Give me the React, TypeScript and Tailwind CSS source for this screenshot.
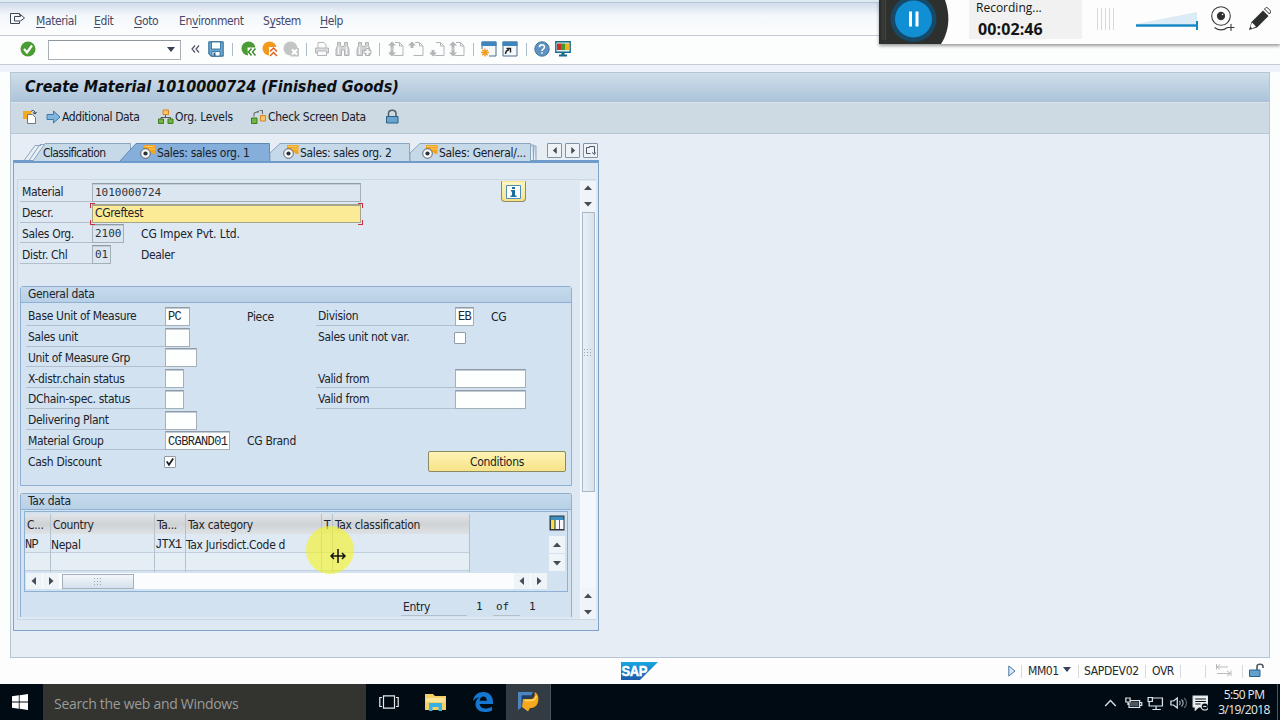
import React from 'react';
import clsx from 'clsx';

const MENU = [
  { label: 'Material', key: 0, width: 'w-[58px]' },
  { label: 'Edit', key: 0, width: 'w-[40px]' },
  { label: 'Goto', key: 0, width: 'w-[45px]' },
  { label: 'Environment', key: 2, width: 'w-[84px]' },
  { label: 'System', key: 1, width: 'w-[57px]' },
  { label: 'Help', key: 0, width: 'w-[40px]' },
];

const Icon: React.FC<{ className?: string; children: React.ReactNode }> = ({ className, children }) => (
  <svg viewBox="0 0 16 16" className={clsx('h-4 w-4 shrink-0 overflow-visible', className)} fill="none">
    {children}
  </svg>
);

const Sep = ({ className }: { className?: string }) => (
  <div className={clsx('h-[13px] w-px shrink-0 bg-[#aebcca]', className)} />
);

const Binoculars = ({ plus }: { plus?: boolean }) => (
  <>
    <path
      d="M2.500 1.500h3v2.500l1 1.500h2l1-1.500V1.500h3V4.500l1.500 4V14.500H9.500V9h-3v5.500H1V8.500L2.500 4.500z"
      fill="#d2d4d5"
      stroke="#aeb1b3"
    />
    <path d="M3.500 6v7M11.500 6v7" stroke="#f4f4f4" />
    {plus && <path d="M10 7.500h3v2h2v3h-2v2h-3v-2H8v-3h2z" fill="#f6f6f6" stroke="#aeb1b3" />}
  </>
);

const PageIcon = ({ up, down }: { up?: boolean; down?: boolean }) => (
  <>
    <path d="M7 1.500h4.500l3.500 3.500v9.500h-9.500" stroke="#b2b5b7" />
    <path d="M11.500 1.500V5H15" stroke="#b2b5b7" />
    {up && <path d="M4 .500l4 4H5.500v2.500h-3V4.500H0z" fill="#b2b5b7" />}
    {down && <path d="M4 15.500l-4-4h2.500v-2.500h3v2.500H8z" fill="#b2b5b7" />}
    {up && down && <path d="M2.500 6h3v4h-3z" fill="#c2c4c6" />}
  </>
);

const Chevrons = ({ color }: { color: string }) => (
  <path d="M10.500 7.500L7.500 11l3 3.500M14.500 7.500l-3 3.500 3 3.500" stroke={color} strokeWidth="1.500" />
);

const Arrow = ({ dir, className }: { dir: 'left' | 'right' | 'up' | 'down'; className?: string }) => (
  <svg viewBox="0 0 8 8" className={clsx('h-2 w-2 shrink-0', className)} fill="#444c55">
    {dir === 'left' && <path d="M6 0v8L1.500 4z" />}
    {dir === 'right' && <path d="M2 0v8l4.500-4z" />}
    {dir === 'up' && <path d="M0 6h8L4 1.500z" />}
    {dir === 'down' && <path d="M0 2h8L4 6.500z" />}
  </svg>
);

const MenuBar = () => (
  <div className="flex h-[36px] shrink-0 flex-col border-b border-[#c3ccd4] bg-linear-to-b from-[#c9d6e5] via-[#f4f8fc] via-45% to-[#fcfdfd]">
    <div className="h-[3px] border-b border-[#b4c6d8] bg-[#dfe9f2]" />
    <div className="flex flex-1 items-center pt-[4px] pl-[10px]">
      <svg viewBox="0 0 15 12" className="-mt-[5px] mr-[11px] h-3 w-[15px]" fill="none" stroke="#3f4757">
        <path d="M9.500 2.500v-2h-9v10h9v-2" />
        <path d="M4.500 3.500h6v-2l4 3.500-4 3H4.500z" />
      </svg>
      {MENU.map((m) => (
        <span key={m.label} className={clsx('text-[12px] leading-4 tracking-[-0.4px] text-[#474867]', m.width)}>
          {m.label.slice(0, m.key)}
          <span className="underline underline-offset-2">{m.label[m.key]}</span>
          {m.label.slice(m.key + 1)}
        </span>
      ))}
    </div>
  </div>
);

const ToolBar = () => (
  <div className="flex h-[29px] shrink-0 items-center border-b border-[#c3ccd4] bg-[#fcfdfd] pl-[20px] pb-[2px]">
    <Icon>
      <circle cx="8" cy="8" r="7.500" fill="#4c9c36" />
      <path d="M4 8l3 3.500 5-7" stroke="#fff" strokeWidth="2.200" />
    </Icon>
    <div className="mt-px ml-[12px] flex h-[20px] w-[133px] shrink-0 items-center justify-end border border-t-[#8f979d] border-[#a9b0b6] bg-white pr-[5px]">
      <svg viewBox="0 0 8 5" className="h-[5px] w-2" fill="#39405a">
        <path d="M0 0h8L4 5z" />
      </svg>
    </div>
    <svg viewBox="0 0 9 8" className="ml-[10px] h-2 w-[9px] shrink-0" fill="none" stroke="#4d5560" strokeWidth="1.200">
      <path d="M4 .5L1 4l3 3.500M8 .5L5 4l3 3.500" />
    </svg>
    <Icon className="ml-[8px]">
      <path d="M.800 .800h14.400v14.400H3L.800 13z" fill="#67a9d3" stroke="#2b678f" />
      <path d="M3.500 1h9v7h-9z" fill="#fbfdfe" stroke="#2b678f" strokeWidth=".8" />
      <path d="M4 10.500h8V15H4z" fill="#fbfdfe" stroke="#2b678f" strokeWidth=".8" />
      <path d="M5.500 11.500h2V15h-2z" fill="#2b678f" />
    </Icon>
    <Sep className="ml-[8px]" />
    <Icon className="ml-[8px]">
      <circle cx="7.500" cy="7.500" r="7" fill="#4c9c36" />
      <path d="M6.500 6.500H16v8.500H7z" fill="#fff" />
      <Chevrons color="#3c8a2c" />
    </Icon>
    <Icon className="ml-[5px]">
      <circle cx="7.500" cy="7.500" r="7" fill="#f19a1f" />
      <path d="M7 6h9v10H7z" fill="#fff" />
      <path d="M8 10.500l3.500-3.500 3.500 3.500M8 15l3.500-3.500 3.500 3.500" stroke="#e2641c" strokeWidth="1.500" />
    </Icon>
    <Icon className="ml-[5px]">
      <circle cx="7.500" cy="7.500" r="7" fill="#c2c4c5" />
      <path d="M7.500 7h8.500v8.500H7.500z" fill="#c2c4c5" />
      <path d="M9 8.500l5 5M14 8.500l-5 5" stroke="#fff" strokeWidth="2" />
    </Icon>
    <Sep className="ml-[7px]" />
    <Icon className="ml-[7px]">
      <path d="M4 7V1.500h6L12 4v3" stroke="#b3b6b8" />
      <path d="M1.500 7h13v5h-13z" fill="#dcddde" stroke="#b3b6b8" />
      <path d="M3.500 10h9v4.500h-9z" fill="#fafafa" stroke="#b3b6b8" />
    </Icon>
    <Icon className="ml-[5px]">
      <Binoculars />
    </Icon>
    <Icon className="ml-[5px]">
      <Binoculars plus />
    </Icon>
    <Sep className="ml-[7px]" />
    <Icon className="ml-[8px]">
      <PageIcon up down />
    </Icon>
    <Icon className="ml-[4px]">
      <PageIcon up />
    </Icon>
    <Icon className="ml-[5px]">
      <PageIcon down />
    </Icon>
    <Icon className="ml-[4px]">
      <PageIcon up down />
    </Icon>
    <Sep className="ml-[8px]" />
    <Icon className="ml-[7px]">
      <path d="M1 1h14v14H1z" fill="#f4f8fa" stroke="#4b6f8c" />
      <path d="M.500.500h15V5H.500z" fill="#3d86bd" />
      <path d="M0 8h8v8H0z" fill="#fcfdfd" />
      <path d="M4 7.500v8M0 11.500h8M1.200 8.700l5.600 5.600M6.800 8.700l-5.600 5.600" stroke="#f0a01e" strokeWidth="1.500" />
    </Icon>
    <Icon className="ml-[5px]">
      <path d="M1 1h14v14H1z" fill="#f4f8fa" stroke="#4b6f8c" />
      <path d="M.500.500h15V5H.500z" fill="#3d86bd" />
      <path d="M3.500 13c0-2 1-3.500 3.500-4.500M4.500 7.500h4v4" stroke="#222" strokeWidth="1.400" />
    </Icon>
    <Sep className="ml-[8px]" />
    <Icon className="ml-[7px]">
      <circle cx="8" cy="8" r="7.200" fill="#5d93c0" stroke="#3f739f" />
      <path d="M5.500 6.200C5.500 3 10.500 3 10.500 6c0 2-2.500 2-2.500 4M8 11.200v1.600" stroke="#fff" strokeWidth="1.600" />
    </Icon>
    <Icon className="ml-[5px]">
      <path d="M.8.800h14.400v10.400H.800z" fill="#dff0f4" stroke="#1b6a8c" strokeWidth="1.400" />
      <path d="M2 2.500h4V9H2z" fill="#d22b24" />
      <path d="M6 2.500h4V9H6z" fill="#3a9a34" />
      <path d="M10 2.500h4V9h-4z" fill="#eeb21f" />
      <path d="M6.500 11.500h3v2h2.500v2H4v-2h2.500z" fill="#1b6a8c" />
    </Icon>
  </div>
);

const TitleBar = () => (
  <div className="flex h-[30px] shrink-0 items-center border-b border-[#d7e4ee] bg-linear-to-b from-[#cfdeea] to-[#abc3d9] pb-[2px] pl-[14px]">
    <h1 className="text-[16px] font-bold text-[#0b0f14] italic">Create Material 1010000724 (Finished Goods)</h1>
  </div>
);

const AppToolBar = () => (
  <div className="flex h-[31px] shrink-0 items-center border-b border-[#b5c7d4] bg-[#cddae3] pb-[2px] pl-[11px]">
    <Icon>
      <path d="M1 2h8v8H1z" fill="#f3a91f" />
      <path d="M5.500 5.500h5l3 3v6h-8z" fill="#fff" stroke="#6f7880" />
      <path d="M9 2.500c2-2 4-1 4 2M11 3.500l2 1.500 1.500-2" stroke="#333" />
    </Icon>
    <Icon className="ml-[8px]">
      <path d="M1 5.500h6.500V2L14 8l-6.500 6v-3.500H1z" fill="#82b6de" stroke="#3c78a8" />
    </Icon>
    <span className="w-[96px] text-[12px] tracking-[-0.4px] text-[#16202a]">Additional Data</span>
    <Icon>
      <path d="M7.500 6v3M3 11V8.500h9.500V11" stroke="#555" />
      <path d="M5 1h5.500v4.500H5z" fill="#f9c66a" stroke="#d9821c" />
      <path d="M.500 10h5v4.500h-5zM10 10h5v4.500h-5z" fill="#74b53f" stroke="#3f7d25" />
    </Icon>
    <span className="ml-px w-[76px] text-[12px] tracking-[-0.25px] text-[#16202a]">Org. Levels</span>
    <Icon>
      <path d="M.500 9H6v5.500H.500z" fill="#74b53f" stroke="#3f7d25" />
      <path d="M9.500 6.500h5v5.500h-5z" fill="#f9c66a" stroke="#d9821c" />
      <path d="M3 7.500V4l4-1.500M8 1.500L6.500 4M9 1.500h2.500v3.500" stroke="#555" strokeWidth=".9" />
    </Icon>
    <span className="ml-px w-[117px] text-[12px] tracking-[-0.3px] text-[#16202a]">Check Screen Data</span>
    <Icon>
      <path d="M3.500 7.500V4.500C3.500 0 11 0 11 4.500v3" stroke="#555d66" strokeWidth="1.500" />
      <path d="M1.500 7.500h11.500v6.500H1.500z" fill="#6aa5cf" stroke="#2d5f88" />
    </Icon>
  </div>
);

const ViewIcon = () => (
  <Icon className="relative">
    <path d="M4 1h11.500v9H13l-2-2H4z" fill="#f2a51e" />
    <path d="M5 2.500h9M9 5h6" stroke="#ffc95c" />
    <circle cx="5.500" cy="9.500" r="4.800" fill="#f7f9fa" stroke="#56606b" />
    <circle cx="5.500" cy="9.500" r="2.100" fill="#2b323a" />
  </Icon>
);

interface TabProps {
  label: string;
  active?: boolean;
  icon?: boolean;
  stack?: 'left' | 'right';
  width: number;
  className: string;
}

const Tab: React.FC<TabProps> = ({ label, active, icon, stack, width, className }) => (
  <div className={clsx('relative flex h-[18px] shrink-0 items-center', className)}>
    <svg viewBox={`0 0 ${width} 18`} className="absolute inset-0 h-full w-full overflow-visible">
      {stack === 'left' && <path d="M0 17.500L11 2.500h6M5 17.500L16 1.500h6" fill="none" stroke="#8aa6c0" />}
      {stack === 'right' && (
        <path d={`M${width} 2h2.500v15M${width + 2} 3h3v14`} fill="#c9dbea" stroke="#8aa6c0" />
      )}
      <path
        d={
          stack === 'left'
            ? `M9 18L21 .5H${width - 0.5}V18`
            : active
              ? `M0 18L16 .5H${width - 0.5}V18`
              : `M0 18V10L10 .5H${width - 0.5}V18`
        }
        fill={active ? '#86aedb' : '#c6d9e9'}
        stroke={active ? '#5f8ab5' : '#8aa6c0'}
      />
    </svg>
    {icon && <ViewIcon />}
    <span className="relative ml-px pt-[2px] text-[12px] whitespace-nowrap text-[#16202a]">{label}</span>
  </div>
);

const NavButton: React.FC<{ children: React.ReactNode }> = ({ children }) => (
  <div className="flex h-[15px] w-[15px] items-center justify-center rounded-[1px] border border-[#7f93a8] bg-[#eef3f8]">
    {children}
  </div>
);

const TabStrip = () => (
  <div className="flex h-[17px] shrink-0 pl-[11px]">
    <Tab label="Classification" stack="left" width={107} className="w-[107px] pl-[18px] tracking-[-0.65px]" />
    <Tab label="Sales: sales org. 1" icon active width={150} className="-ml-[11px] w-[150px] pl-[20px] tracking-[-0.3px]" />
    <Tab label="Sales: sales org. 2" icon width={140} className="w-[140px] pl-[13px] tracking-[-0.35px]" />
    <Tab label="Sales: General/..." icon stack="right" width={121} className="w-[121px] pl-[12px] tracking-[-0.3px]" />
    <div className="ml-[16px] flex gap-[3px]">
      <NavButton>
        <Arrow dir="left" className="h-[7px]" />
      </NavButton>
      <NavButton>
        <Arrow dir="right" className="h-[7px]" />
      </NavButton>
      <NavButton>
        <svg viewBox="0 0 11 11" className="h-[11px] w-[11px]" fill="none" stroke="#4a5663">
          <path d="M5.500 8.500h-4v-6h3v-1h5v7M7 7.500l2.500 2 1-2" />
        </svg>
      </NavButton>
    </div>
  </div>
);

interface FieldProps {
  value?: string;
  width: string;
  readOnly?: boolean;
}

const Field: React.FC<FieldProps> = ({ value, width, readOnly }) => (
  <div
    className={clsx(
      'flex h-[19px] shrink-0 items-center border border-[#a5afb8] border-t-[#8f9ba6] pl-[2px] whitespace-nowrap shadow-[inset_0_1px_0_#c3ccd4]',
      readOnly
        ? 'bg-[#dce6f0] font-["DejaVu_Sans_Mono",monospace] text-[11px] tracking-normal text-[#2a3440]'
        : 'bg-[#fdfefe] pt-[3px] font-["Liberation_Mono",monospace] text-[12px] tracking-[-0.6px] text-[#20262c]',
      width,
    )}
  >
    {value}
  </div>
);

const Label: React.FC<{ className: string; children: React.ReactNode; line?: boolean }> = ({
  className,
  children,
  line = true,
}) => (
  <div
    className={clsx(
      'flex h-[20px] shrink-0 items-center border-b pl-[2px] pt-[3px] whitespace-nowrap',
      line ? 'border-[#b3bfca]' : 'border-transparent',
      className,
    )}
  >
    {children}
  </div>
);

const HeaderRow: React.FC<{ label: string; children: React.ReactNode }> = ({ label, children }) => (
  <div className="flex h-[20.75px] items-end">
    <Label className="w-[72px]">{label}</Label>
    {children}
  </div>
);

const Corner = ({ className }: { className: string }) => (
  <span className={clsx('absolute z-10 h-[5px] w-[5px] border-[#c5303c]', className)} />
);

const MaterialHeader = () => (
  <div className="flex h-[105px] flex-col">
    <HeaderRow label="Material">
      <Field value="1010000724" width="w-[269px]" readOnly />
      <div className="ml-[140px] flex h-[21px] w-[25px] items-center justify-center self-start rounded-b-sm border border-[#8f8a67] border-t-transparent bg-linear-to-b from-[#fdf6c4] to-[#f7e284]">
        <svg viewBox="0 0 15 14" className="h-[14px] w-[15px]">
          <path d="M.500.500h14v13H.500z" fill="#fff" stroke="#4d8fb4" />
          <path d="M6 2h3v2H6zM5 5h4v5.500h1.500V12h-6v-1.500H6v-4H5z" fill="#1b6f9e" />
        </svg>
      </div>
    </HeaderRow>
    <HeaderRow label="Descr.">
      <div className="relative flex h-[19px] w-[269px] items-center border border-t-2 border-[#a5a58e] bg-[#fbeb96] pl-[2px]">
        CGreftest
        <Corner className="-top-[3px] -left-[3px] border-t border-l" />
        <Corner className="-top-[3px] -right-[3px] border-t border-r" />
        <Corner className="-bottom-[3px] -left-[3px] border-b border-l" />
        <Corner className="-right-[3px] -bottom-[3px] border-r border-b" />
      </div>
    </HeaderRow>
    <HeaderRow label="Sales Org.">
      <Field value="2100" width="w-[32px]" readOnly />
      <span className="ml-[17px] pb-px tracking-[-0.1px]">CG Impex Pvt. Ltd.</span>
    </HeaderRow>
    <HeaderRow label="Distr. Chl">
      <Field value="01" width="w-[19px]" readOnly />
      <span className="ml-[30px] pb-px">Dealer</span>
    </HeaderRow>
  </div>
);

const CheckBox = ({ checked }: { checked?: boolean }) => (
  <div className="-ml-px mb-[3px] flex h-[12px] w-[12px] items-center justify-center rounded-[1px] border border-[#8f9ba6] bg-white">
    {checked && (
      <svg viewBox="0 0 8 8" className="h-2 w-2" fill="none" stroke="#1b2026" strokeWidth="1.800">
        <path d="M.800 3.500L3 6.800 7.200.600" />
      </svg>
    )}
  </div>
);

const ROWS = [
  { label: 'Base Unit of Measure', width: 'w-[25px]', value: 'PC', text: 'Piece' },
  { label: 'Sales unit', width: 'w-[25px]' },
  { label: 'Unit of Measure Grp', width: 'w-[32px]' },
  { label: 'X-distr.chain status', width: 'w-[19px]' },
  { label: 'DChain-spec. status', width: 'w-[19px]' },
  { label: 'Delivering Plant', width: 'w-[32px]' },
  { label: 'Material Group', width: 'w-[65px]', value: 'CGBRAND01', text: 'CG Brand' },
];

const GroupTitle: React.FC<{ children: React.ReactNode }> = ({ children }) => (
  <div className="flex h-[16px] shrink-0 items-center border-b border-[#8fb0d2] bg-linear-to-b from-[#c6daec] to-[#b8d0e6] pl-[7px]">
    {children}
  </div>
);

const GeneralData = () => (
  <section className="flex h-[200px] w-[552px] flex-col rounded-t-[3px] border border-[#8fb0d2] bg-[#d2e2f1]">
    <GroupTitle>General data</GroupTitle>
    <div className="flex pt-[2px] pl-[5px]">
      <div className="w-[290px]">
        {ROWS.map((r) => (
          <div key={r.label} className="flex h-[20.75px] items-end">
            <Label className="w-[139px]">{r.label}</Label>
            <div className="w-[82px]">
              <Field value={r.value} width={r.width} />
            </div>
            <span className="pb-px">{r.text}</span>
          </div>
        ))}
        <div className="flex h-[20.75px] items-end">
          <Label line={false} className="w-[139px]">
            Cash Discount
          </Label>
          <CheckBox checked />
        </div>
      </div>
      <div className="flex w-[250px] flex-col">
        <div className="flex h-[20.75px] items-end">
          <Label className="w-[139px]">Division</Label>
          <Field value="EB" width="w-[19px]" />
          <span className="ml-[17px] pb-px">CG</span>
        </div>
        <div className="flex h-[41.5px] items-start pt-px">
          <Label line={false} className="w-[139px]">
            Sales unit not var.
          </Label>
          <div className="pt-[5px]">
            <CheckBox />
          </div>
        </div>
        {[0, 1].map((i) => (
          <div key={i} className="flex h-[20.75px] items-end">
            <Label className="w-[139px]">Valid from</Label>
            <Field width="w-[71px]" />
          </div>
        ))}
        <button className="mt-[42px] ml-[112px] h-[21px] w-[138px] rounded-[2px] border border-[#8b8865] bg-linear-to-b from-[#fdf3b4] to-[#f7e387] pt-px text-center leading-[18px]">
          Conditions
        </button>
      </div>
    </div>
  </section>
);

const COLS = [
  { head: 'C...', cell: 'NP', width: 'w-[26px]', mono: true },
  { head: 'Country', cell: 'Nepal', width: 'w-[104px]' },
  { head: 'Ta...', cell: 'JTX1', width: 'w-[31px]', mono: true },
  { head: 'Tax category', cell: 'Tax Jurisdict.Code d', width: 'w-[136px]' },
  { head: 'T', cell: '', width: 'w-[11px]' },
  { head: 'Tax classification', cell: '', width: 'w-[137px]' },
];

const ArrowBox: React.FC<{ dir: 'left' | 'right' | 'up' | 'down'; className: string }> = ({ dir, className }) => (
  <div className={clsx('flex shrink-0 items-center justify-center bg-[#eff4f9]', className)}>
    <Arrow dir={dir} />
  </div>
);

const TaxData = () => (
  <section className="flex h-[124px] w-[552px] flex-col rounded-t-[3px] border border-b-0 border-[#8fb0d2] bg-[#d2e2f1]">
    <GroupTitle>Tax data</GroupTitle>
    <div className="mt-px ml-[3px] flex h-[81px] w-[544px] flex-col border border-[#8fb0d2] pt-[2px]">
      <div className="flex h-[58px]">
        {COLS.map((c) => (
          <div key={c.head} className={clsx('flex shrink-0 flex-col border-r border-[#b4c0cc]', c.width)}>
            <div className="flex h-[20px] items-center overflow-hidden bg-linear-to-b from-[#e2e5e8] via-[#d0d3d6] to-[#dfe2e5] pt-[2px] pl-[2px] whitespace-nowrap">
              {c.head}
            </div>
            <div
              className={clsx(
                'flex h-[19px] items-center border-b border-[#c1cfdc] bg-[#dfe9f3] pt-[4px] whitespace-nowrap',
                c.mono && 'font-["Liberation_Mono",monospace] text-[12px] tracking-[-0.6px]',
              )}
            >
              {c.cell}
            </div>
            <div className="h-[18px] border-b border-[#c1cfdc] bg-[#e6eef5]" />
          </div>
        ))}
        <div className="ml-[79px] flex w-[16px] flex-col">
          <svg viewBox="0 0 16 18" className="mb-[4px] h-[18px] w-4 shrink-0">
            <path d="M.500 1.500h15v15H.500z" fill="#2d3640" />
            <path d="M1.500 2.500h13V6h-13z" fill="#3a8ec2" />
            <path d="M2 6h3.500v9H2z" fill="#f4e33a" />
            <path d="M6.500 6h3.500v9H6.500zM11 6h3.500v9H11z" fill="#f6f8fa" />
            <path d="M6 3v12M10.500 3v12" stroke="#6b8ba5" strokeWidth=".6" />
          </svg>
          <ArrowBox dir="up" className="mb-px h-[17px]" />
          <ArrowBox dir="down" className="h-[17px]" />
        </div>
      </div>
      <div className="mt-px ml-[1px] flex h-[16px] w-[521px] items-center bg-[#fbfcfe]">
        <ArrowBox dir="left" className="mr-px h-4 w-[16px]" />
        <ArrowBox dir="right" className="h-4 w-[16px]" />
        <div className="ml-[3px] flex h-[15px] w-[72px] items-center justify-center gap-px border border-[#a3b0bd] bg-linear-to-b from-[#f3f7fb] to-[#d5e0ea]">
          <Grip />
        </div>
        <ArrowBox dir="left" className="mr-px ml-auto h-4 w-[16px]" />
        <ArrowBox dir="right" className="h-4 w-[16px]" />
      </div>
    </div>
    <div className="flex pt-[4px] pl-[380px]">
      <Label className="w-[66px]">Entry</Label>
      <div className="flex h-[20px] items-center font-['DejaVu_Sans_Mono',monospace] text-[11px] tracking-normal">
        <span className="ml-[9px] w-[17px] pt-px">1</span>
        <span className="flex h-[20px] w-[27px] items-center border-b border-[#b3bfca] pt-px pl-[3px]">of</span>
        <span className="ml-[9px] pt-px">1</span>
      </div>
    </div>
  </section>
);

const Grip = ({ className }: { className?: string }) => (
  <svg viewBox="0 0 8 7" className={clsx('h-[7px] w-2', className)} stroke="#9aa8b6" strokeDasharray="1 2">
    <path d="M0 .500h8M0 3.500h8M0 6.500h8" />
  </svg>
);

const VScroll = () => (
  <div className="ml-[8px] flex h-[438px] w-[16px] flex-col items-center bg-[#f4f7fb]">
    <ArrowBox dir="up" className="h-[14px] w-[15px]" />
    <ArrowBox dir="down" className="h-[17px] w-[15px]" />
    <div className="flex h-[280px] w-[13px] items-center justify-center border border-[#a8b5c2] bg-linear-to-r from-[#e9f0f6] to-[#d8e3ed]">
      <Grip />
    </div>
    <ArrowBox dir="up" className="mt-auto h-[16px] w-[15px]" />
    <ArrowBox dir="down" className="h-[15px] w-[15px]" />
  </div>
);

const Panel = () => (
  <div className="flex h-[471px] w-[586px] flex-col border border-t-[3px] border-[#7fa3c7] border-t-[#6f9bcb] bg-[#dde8f3] pt-[16px] pl-[3px]">
    <div className="flex h-[441px] w-[579px] border-t border-b border-l border-[#cbd8e4] pt-px">
      <div className="flex w-[554px] flex-col pl-[2px]">
        <MaterialHeader />
        <GeneralData />
        <div className="h-[7px] shrink-0" />
        <TaxData />
      </div>
      <VScroll />
    </div>
  </div>
);

const StatusBar = () => (
  <div className="flex h-[26px] shrink-0 items-center bg-[#fcfdfc] text-[12px] tracking-[-0.4px] text-[#23282e]">
    <svg viewBox="0 0 37 18" className="ml-[621px] h-[18px] w-[37px]">
      <defs>
        <linearGradient id="sap" x2="0" y2="1">
          <stop offset="0" stopColor="#19a7e0" />
          <stop offset="1" stopColor="#1b5cab" />
        </linearGradient>
      </defs>
      <path d="M0 0h37L19 18H0z" fill="url(#sap)" />
      <text
        x=".5"
        y="14"
        fill="#fff"
        stroke="#fff"
        strokeWidth=".5"
        fontFamily="Liberation Sans"
        fontWeight="bold"
        fontSize="14"
        textLength="25.500"
        lengthAdjust="spacingAndGlyphs"
      >
        SAP
      </text>
    </svg>
    <svg viewBox="0 0 8 12" className="ml-[350px] h-3 w-2" fill="#dbe8f3" stroke="#4678a6">
      <path d="M.800 1v10L7 6z" />
    </svg>
    <Sep className="ml-[5px] bg-[#d5dadd]" />
    <span className="ml-[6px] w-[35px]">MM01</span>
    <svg viewBox="0 0 8 5" className="-mt-1 h-[5px] w-2" fill="#39405a">
      <path d="M0 0h8L4 5z" />
    </svg>
    <Sep className="ml-[7px] bg-[#d5dadd]" />
    <span className="ml-[5px] w-[61px] tracking-[-0.3px]">SAPDEV02</span>
    <Sep className="bg-[#d5dadd]" />
    <span className="ml-[6px] w-[28px]">OVR</span>
    <Sep className="bg-[#d5dadd]" />
    <Sep className="ml-[24px] bg-[#d5dadd]" />
    <Icon className="ml-[10px]">
      <path d="M.500 1v5.500M15 7.500v5.500M1 4h11M4 1.500L1 4l3 2.500M1 10.500h13M11 8l3.500 2.500L11 13" stroke="#b7bbbe" />
    </Icon>
    <Sep className="ml-[10px] bg-[#d5dadd]" />
    <Icon className="ml-[6px]">
      <path d="M8 7V3.500c0-3 6-3 6 0V5" stroke="#4f565d" strokeWidth="1.600" />
      <path d="M.500 7H11v6.500H.500z" fill="#62a1cd" stroke="#2a628e" />
    </Icon>
  </div>
);

const TaskBar = () => (
  <div className="flex h-[36px] shrink-0 items-center bg-[#010b13] font-['Open_Sans','Noto_Sans',sans-serif]">
    <div className="flex w-[43px] justify-center pr-[3px]">
      <svg viewBox="0 0 16 16" className="h-4 w-4" fill="#fff">
        <path d="M0 2.300l6.800-1v6.300H0zM7.600 1.200L16 0v7.600H7.600zM0 8.400h6.800v6.300l-6.800-1zM7.600 8.400H16V16l-8.400-1.200z" />
      </svg>
    </div>
    <div className="flex h-full w-[323px] items-center bg-[#333430] pt-[2px] pl-[11px] text-[14px] tracking-[-0.3px] text-[#9b9b99]">
      Search the web and Windows
    </div>
    <svg viewBox="0 0 20 14" className="ml-[13px] h-[14px] w-5" fill="none" stroke="#e8eaeb" strokeWidth="1.200">
      <path d="M4.500 .800h11v12.400h-11zM3 2.500H.800v9H3M17 2.500h2.200v9H17" />
    </svg>
    <svg viewBox="0 0 21 18" className="ml-[26px] h-[18px] w-[21px]">
      <path d="M0 1h8l2 2h11v14H0z" fill="#f3cf68" />
      <path d="M1 5h19v4H1z" fill="#fae49a" />
      <path d="M4 10h13v8h-3.500v-4h-6v4H4z" fill="#37b2e4" />
    </svg>
    <svg viewBox="0 0 20 20" className="ml-[27px] h-5 w-5" fill="#1477d1">
      <path d="M0 9C1 3 5 0 10.500 0 16.500 0 20 4.500 20 10v2H6.500c.5 3 3 4.500 6 4.500 2.500 0 4.500-.600 6.500-1.800v3.800c-2 1-4.500 1.500-7 1.500C6 20 2.500 16.500 2.500 12 2.500 9 4 6.800 6.500 5.200 4 5.500 1.500 7 0 9zm6.500-.300h7.300C13.800 6 12.500 4.500 10.500 4.500S7 6 6.500 8.700z" />
    </svg>
    <div className="ml-[13px] flex h-full w-[45px] items-center justify-center border-r border-[#4b545b] bg-[#333c42]">
      <svg viewBox="0 0 22 22" className="h-[22px] w-[22px]">
        <path d="M1 1h15l-2 3.500H5V16l-4 3z" fill="#4c86c2" />
        <path d="M4.500 4.500H14L8 10v9l-3.500-2z" fill="#1e3f68" />
        <path d="M6 8h8c3 0 4.500-3 3.500-7 4 2 4.500 6 3.500 10s-4 6-8 6l-2 3.500-6-4.500z" fill="#f5a81c" />
        <path d="M8 9.500h6c3 0 5-2 5-4.500" stroke="#ffdb6b" fill="none" strokeWidth="1.500" />
      </svg>
    </div>
    <svg viewBox="0 0 100 16" className="mt-[2px] ml-auto h-4 w-[106px] shrink-0" preserveAspectRatio="none" fill="none" stroke="#dfe3e6" strokeWidth="1.200">
      <path d="M3 11l5-5.500L13 11" />
      <path d="M26 5.500h9.500v7H25.500V8M36 7.500h1.500v3H36M22.500 3v4h4V3zM24.500 7v3" />
      <path d="M26.500 6.500h8v5h-8z" fill="#dfe3e6" stroke="none" opacity=".35" />
      <path d="M47 3h10v8H44.500V6.500M51 11v3M47.500 14.500h8M43.500 2.500h4v4h-4z" />
      <path d="M65 6h2.500L71 3v10l-3.500-3H65z" />
      <path d="M73 6c1 1 1 3 0 4M75 4.500c2 2 2 5 0 7" opacity=".7" />
      <path d="M77.500 3c3 3 3 7 0 10" opacity=".4" />
      <path d="M86 1h14v11H91l-3 3v-3h-2z" fill="#eef0f1" />
      <path d="M88 4h10M88 6.500h10M88 9h5" stroke="#010b13" />
      <circle cx="97" cy="11.500" r="3.500" fill="#010b13" />
      <path d="M95.500 11.500h3" />
    </svg>
    <div className="ml-[10px] w-[52px] text-center text-[12px] leading-[15.500px] tracking-[-0.6px] whitespace-nowrap text-[#e9ebec]">
      <div>5:50 PM</div>
      <div>3/19/2018</div>
    </div>
    <div className="ml-[7px] h-full w-[3px] border-l border-[#4b545b]" />
  </div>
);

const Recorder = () => (
  <div className="absolute top-0 right-0 flex h-[44px] w-[401px] bg-[#fcfdfc] font-['Open_Sans','Noto_Sans',sans-serif] shadow-[0_2px_3px_rgba(90,90,90,0.6)]">
    <svg viewBox="0 0 70 44" className="h-[44px] w-[70px]">
      <path d="M0 0h66c5 14 5 30-4 44H0z" fill="#2e302e" />
      <path d="M4 0v40M6.500 0v40" stroke="#454745" />
      <circle cx="34.500" cy="19" r="23" fill="#174a69" />
      <circle cx="34.500" cy="19" r="18.500" fill="#118fd4" />
      <path d="M31.500 11.500v15M38 11.500v15" stroke="#fff" strokeWidth="3" />
    </svg>
    <div className="ml-[20px] h-[39px] w-[113px] bg-[#f0f1f0] pl-[7px] text-[#151515]">
      <div className="text-[12px] leading-[15px]">Recording...</div>
      <div className="pt-[3px] pl-[2px] text-[16px] leading-[22px] font-bold tracking-[0.1px]">00:02:46</div>
    </div>
    <svg viewBox="0 0 18 22" className="mt-[8px] ml-[15px] h-[22px] w-[18px]" stroke="#d6dade">
      <path d="M.500 0v22M4.500 0v22M8.500 0v22M12.500 0v22M16.500 0v22" />
    </svg>
    <svg viewBox="0 0 62 18" className="mt-[12px] ml-[21px] h-[18px] w-[62px]">
      <path d="M0 12L61 0v12z" fill="#dcecf6" />
      <path d="M0 13.500h61" stroke="#1787c4" strokeWidth="2.500" />
      <path d="M61 9v9" stroke="#1787c4" strokeWidth="2" />
    </svg>
    <svg viewBox="0 0 24 26" className="mt-[6px] ml-[13px] h-[26px] w-6 shrink-0" fill="none" stroke="#3b3d3d" strokeWidth="1.100">
      <circle cx="10" cy="10" r="9.300" />
      <circle cx="10" cy="10" r="3.600" fill="#2d2f2f" />
      <circle cx="11.500" cy="8.500" r=".8" fill="#fff" stroke="none" />
      <path d="M3.500 21.500c4 3 9 3 13 0M16.500 21.500h7M20 18v7" />
    </svg>
    <svg viewBox="0 0 24 24" className="mt-[7px] ml-[13px] h-6 w-6 shrink-0" fill="#2d2f2f">
      <path d="M1 23l2.500-8L15 3.500l5.500 5.500L9 20.500z" />
      <path d="M16.500 2l1.500-1.500c1-.5 5 3 4.500 4.500L21.500 7z" fill="#fff" stroke="#2d2f2f" />
      <path d="M2.500 19.500l1.500-4 4 4-4 2z" fill="#fff" />
    </svg>
  </div>
);

const Pointer = () => (
  <div className="absolute top-[526px] left-[306px] h-[48px] w-[48px] rounded-full bg-[#f3f32c]/65">
    <svg viewBox="0 0 16 16" className="absolute top-[22px] left-[24px] h-4 w-4" fill="none" stroke="#111" strokeWidth="1.500">
      <path d="M8 1v14M1 8h14M4 5L1 8l3 3M12 5l3 3-3 3" />
    </svg>
  </div>
);

export default function App() {
  return (
    <div className="relative flex h-[720px] w-[1280px] flex-col overflow-hidden bg-[#fcfdfd] font-['DejaVu_Sans_Condensed','DejaVu_Sans',sans-serif]">
      <MenuBar />
      <ToolBar />
      <div className="h-[7px] shrink-0 bg-[#eef3f9]" />
      <main className="mr-[10px] ml-[10px] flex h-[586px] shrink-0 flex-col border border-[#b5c5d2] bg-[#e7edf4]">
        <TitleBar />
        <AppToolBar />
        <div className="flex flex-col pt-[9px] pl-[2px]">
          <TabStrip />
          <div className="text-[12px] leading-[15px] tracking-[-0.32px] text-[#1b232b]">
            <Panel />
          </div>
        </div>
      </main>
      <StatusBar />
      <TaskBar />
      <Recorder />
      <Pointer />
    </div>
  );
}
